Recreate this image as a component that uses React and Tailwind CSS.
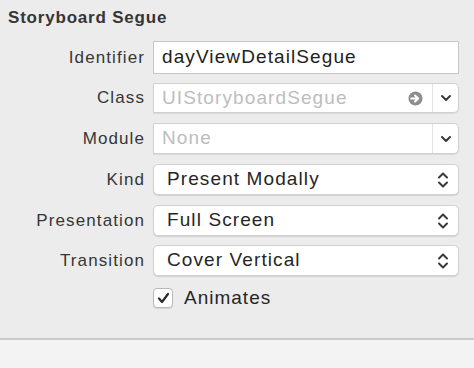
import React from 'react';

const font = { fontFamily: '"Liberation Sans", Arial, sans-serif' };

const UpDown = () => (
  <svg width="12" height="18" viewBox="0 0 12 18" fill="none" stroke="#3a3a3a" strokeWidth="2" strokeLinecap="round" strokeLinejoin="round">
    <path d="M2 6.5 L6 2.5 L10 6.5" />
    <path d="M2 11.5 L6 15.5 L10 11.5" />
  </svg>
);

const Down = () => (
  <svg width="12" height="8" viewBox="0 0 12 8" fill="none" stroke="#3a3a3a" strokeWidth="2" strokeLinecap="round" strokeLinejoin="round">
    <path d="M2 2 L6 6 L10 2" />
  </svg>
);

const GoArrow = () => (
  <svg width="15" height="15" viewBox="0 0 16 16">
    <circle cx="8" cy="8" r="7.5" fill="#8e8e8e" />
    <path d="M3.5 8 H10 M7.5 4.8 L10.8 8 L7.5 11.2" stroke="#fff" strokeWidth="2.2" fill="none" strokeLinecap="round" strokeLinejoin="round" />
  </svg>
);

const Row = ({ label, children, className = '' }) => (
  <div className={`flex items-stretch ${className}`}>
    <div className="w-[145px] flex items-center justify-end text-[17px] tracking-[1.1px] text-[#363636]">
      {label}
    </div>
    <div className="ml-2 w-[306px]">{children}</div>
  </div>
);

const Popup = ({ value }) => (
  <div className="h-full flex items-center justify-between bg-white rounded-[5px] border border-[#d2d2d2] shadow-[0_1px_1px_rgba(0,0,0,0.12)] pl-[13px] pr-[9px]">
    <span className="text-[19px] tracking-[1.1px] text-[#262626]">{value}</span>
    <UpDown />
  </div>
);

const Combo = ({ value, arrow }) => (
  <div className="h-full flex bg-white rounded-r-[5px] border border-[#d0d0d0] shadow-[0_1px_1px_rgba(0,0,0,0.08)]">
    <div className="flex-1 flex items-center justify-between pl-2 pr-[9px]">
      <span className="text-[19px] tracking-[1.1px] text-[#bdbdbd]">{value}</span>
      {arrow && <GoArrow />}
    </div>
    <div className="w-[26px] border-l border-[#e2e2e2] flex items-center justify-center">
      <Down />
    </div>
  </div>
);

export default function App() {
  return (
    <div className="w-[474px] h-[368px] bg-[#ececec] flex flex-col overflow-hidden" style={font}>
      <div className="pl-2 pt-[5px] h-[41px] text-[17px] font-bold tracking-[0.8px] text-[#363636]">
        Storyboard Segue
      </div>
      <div className="flex flex-col">
        <Row label="Identifier" className="h-[33px]">
          <div className="h-full flex items-center bg-white border border-[#c6c6c6] pl-2">
            <span className="text-[19px] tracking-[1.1px] text-[#222]">dayViewDetailSegue</span>
          </div>
        </Row>
        <Row label="Class" className="h-[30px] mt-[9px]">
          <Combo value="UIStoryboardSegue" arrow />
        </Row>
        <Row label="Module" className="h-[31px] mt-[10px]">
          <Combo value="None" />
        </Row>
        <Row label="Kind" className="h-[31px] mt-[10px]">
          <Popup value="Present Modally" />
        </Row>
        <Row label="Presentation" className="h-[31px] mt-[10px]">
          <Popup value="Full Screen" />
        </Row>
        <Row label="Transition" className="h-[31px] mt-[9px]">
          <Popup value="Cover Vertical" />
        </Row>
        <div className="flex items-center mt-[12px] ml-[153px] h-[20px]">
          <div className="w-[20px] h-[20px] bg-white border border-[#b9b9b9] rounded-[4px] flex items-center justify-center shadow-[0_1px_1px_rgba(0,0,0,0.1)]">
            <svg width="13" height="12" viewBox="0 0 13 12" fill="none" stroke="#2c2c2c" strokeWidth="2.2" strokeLinecap="round" strokeLinejoin="round">
              <path d="M2 6.5 L5 10 L11 2" />
            </svg>
          </div>
          <span className="ml-[11px] text-[19px] tracking-[1px] text-[#262626]">Animates</span>
        </div>
      </div>
      <div className="mt-[30px] h-[2px] bg-[#c9c9c9]" />
      <div className="flex-1 bg-[#f3f3f3]" />
    </div>
  );
}
